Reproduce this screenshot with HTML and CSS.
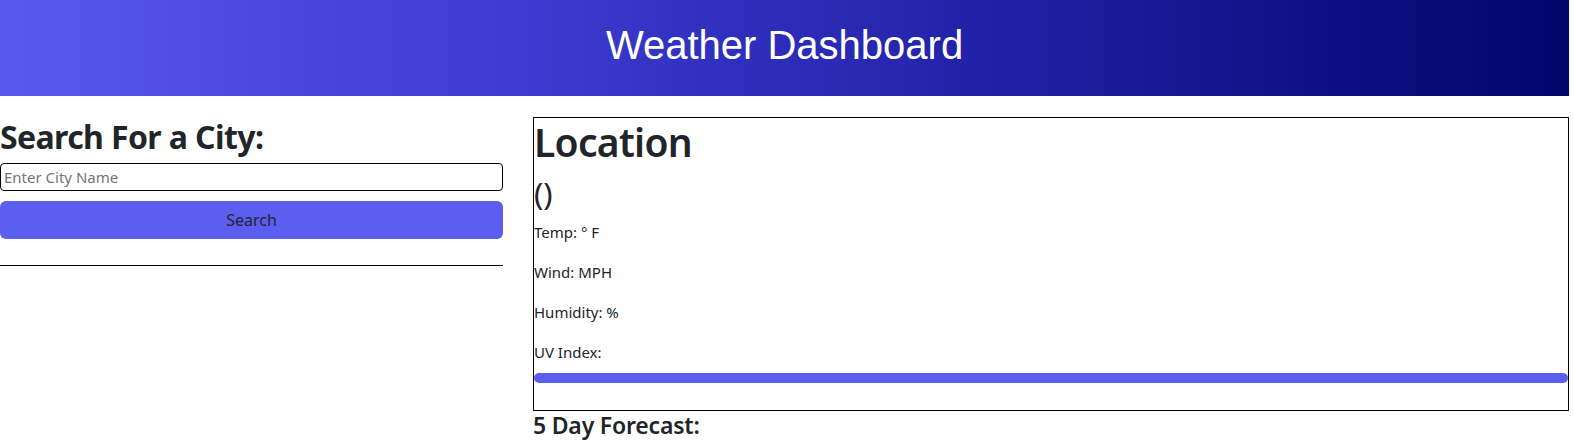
FILE: index.html
```html
<!DOCTYPE html>
<html lang="en">
<head>
<meta charset="utf-8">
<title>Weather Dashboard</title>
<link rel="stylesheet" href="styles.css">
</head>
<body>
<div class="page">
  <header class="banner">
    <h1 class="banner-title">Weather Dashboard</h1>
  </header>
  <main class="main">
    <section class="search-col">
      <h2 class="search-title">Search For a City:</h2>
      <input class="city-input" type="text" placeholder="Enter City Name">
      <button class="search-btn" type="button">Search</button>
      <hr class="divider">
    </section>
    <section class="result-col">
      <div class="current">
        <h1 class="loc">Location</h1>
        <h2 class="date">()</h2>
        <p class="stat">Temp: &deg; F</p>
        <p class="stat">Wind: MPH</p>
        <p class="stat">Humidity: %</p>
        <p class="stat stat-last">UV Index:</p>
        <div class="uv-bar"></div>
      </div>
      <h4 class="forecast-title">5 Day Forecast:</h4>
    </section>
  </main>
</div>
</body>
</html>
```
FILE: styles.css
```css
html, body {
  margin: 0;
  padding: 0;
  background: #ffffff;
}
body {
  font-family: "Noto Sans", "Open Sans", "DejaVu Sans", sans-serif;
  font-size: 16px;
  line-height: 24px;
  color: #212529;
}
.page {
  width: 1569px;
}
.banner {
  background: linear-gradient(to right, #5858f3 0%, #3a3ace 35%, #1f1fa4 65%, #03036c 100%);
  padding: 22px 0 28px;
  text-align: center;
}
.banner-title {
  margin: 0;
  font-family: "Liberation Sans", Arial, sans-serif;
  font-weight: 400;
  font-size: 40px;
  line-height: 46px;
  color: #ffffff;
}
.main {
  display: grid;
  grid-template-columns: 503px 1036px;
  column-gap: 30px;
  padding-top: 20px;
}
.search-col {
  display: flex;
  flex-direction: column;
}
.search-title {
  margin: 0 0 5px;
  font-size: 32px;
  font-weight: 700;
  line-height: 42px;
  letter-spacing: -0.6px;
}
.city-input {
  box-sizing: border-box;
  height: 28px;
  margin: 0;
  padding: 0 3px;
  border: 1px solid #000000;
  border-radius: 4px;
  font-family: inherit;
  font-size: 15px;
  color: #212529;
  background: #fff;
}
.city-input::placeholder {
  color: #757575;
}
.search-btn {
  margin-top: 10px;
  height: 38px;
  border: none;
  border-radius: 6px;
  background: #5c5ef0;
  color: #212529;
  font-family: inherit;
  font-size: 16px;
  line-height: 24px;
}
.divider {
  margin: 26px 0 0;
  border: none;
  border-top: 1px solid #000000;
  height: 0;
}
.result-col {
  display: flex;
  flex-direction: column;
  padding-top: 1px;
}
.current {
  border: 1px solid #000000;
  padding: 0 0 27px;
}
.loc {
  margin: 0 0 8px;
  font-size: 39px;
  font-weight: 600;
  line-height: 48px;
  letter-spacing: -0.7px;
}
.date {
  margin: 0 0 8px;
  font-size: 31px;
  font-weight: 400;
  line-height: 38px;
}
.stat {
  margin: 0 0 16px;
  font-size: 15px;
}
.stat-last {
  margin-bottom: 9px;
}
.uv-bar {
  height: 10px;
  border-radius: 5px;
  background: #5c5ef0;
}
.forecast-title {
  margin: 0;
  font-size: 23px;
  font-weight: 600;
  line-height: 29px;
  letter-spacing: -0.2px;
}
```
